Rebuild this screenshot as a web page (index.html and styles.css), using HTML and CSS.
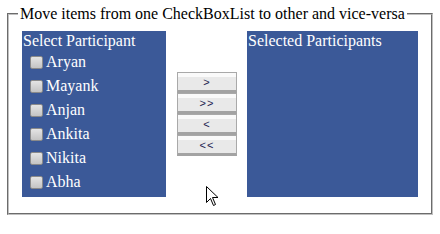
FILE: index.html
```html
<!DOCTYPE html>
<html lang="en">
<head>
    <meta charset="UTF-8">
    <title>Move items between CheckBoxLists</title>
    <link rel="stylesheet" href="styles.css">
</head>
<body>
    <fieldset class="mover">
        <legend>Move items from one CheckBoxList to other and vice-versa</legend>

        <div class="mover-row">
            <div class="panel panel-left">
                <div class="panel-title">Select Participant</div>
                <label class="item"><input type="checkbox"> Aryan</label>
                <label class="item"><input type="checkbox"> Mayank</label>
                <label class="item"><input type="checkbox"> Anjan</label>
                <label class="item"><input type="checkbox"> Ankita</label>
                <label class="item"><input type="checkbox"> Nikita</label>
                <label class="item"><input type="checkbox"> Abha</label>
            </div>

            <div class="actions">
                <button>&gt;</button>
                <button>&gt;&gt;</button>
                <button>&lt;</button>
                <button>&lt;&lt;</button>
            </div>

            <div class="panel panel-right">
                <div class="panel-title">Selected Participants</div>
            </div>
        </div>

        <!-- mouse pointer from the screenshot -->
        <svg class="pointer" width="13" height="21" viewBox="0 0 13 21">
            <path d="M0.5 0.5 L0.5 16.5 L4.5 12.5 L7.5 19.5 L9.5 18.5 L6.5 11.5 L12 11.5 Z" fill="#fff" stroke="#000" stroke-width="1"/>
        </svg>
    </fieldset>
</body>
</html>
```

FILE: styles.css
```css
body {
    margin: 0;
    background: #fff;
    font-family: 'Liberation Serif', 'Times New Roman', serif;
    font-size: 16px;
}

.mover {
    position: relative;
    margin: 5px 7px 0 7px;
    padding: 8px 13px 16px 13px;
    border: 2px groove #c0c0c0;
}

.mover legend {
    margin-left: -4px;
    padding: 0 2px;
    line-height: 18px;
    color: #000;
}

.mover-row {
    display: flex;
    align-items: center;
}

.panel {
    height: 166px;
    background-color: #3b5998;
    color: #fff;
}

.panel-left {
    width: 144px;
}

.panel-right {
    width: 171px;
    align-self: flex-start;
}

.panel-title {
    padding-left: 1px;
    line-height: 19px;
}

.item {
    display: flex;
    align-items: center;
    height: 24px;
    padding-left: 8px;
}

.item input {
    appearance: none;
    -webkit-appearance: none;
    width: 13px;
    height: 13px;
    margin: 0 3px 0 0;
    border: 1px solid #8a8a8a;
    border-radius: 2px;
    background: linear-gradient(#e4e4e4, #c4c4c4);
    box-sizing: border-box;
}

.actions {
    display: flex;
    flex-direction: column;
    margin: 0 10px 0 11px;
}

.actions button {
    width: 60px;
    height: 21px;
    padding: 0;
    border: 1px solid #a9a9a9;
    border-bottom: 3px solid #a3a3a3;
    background: linear-gradient(#fafafa 0, #fafafa 4px, #e9e9e9 4px);
    font-family: 'Liberation Sans', Arial, sans-serif;
    font-size: 11px;
    letter-spacing: 1px;
    color: #232350;
    box-sizing: border-box;
}

.pointer {
    position: absolute;
    left: 197px;
    top: 163px;
}
```
